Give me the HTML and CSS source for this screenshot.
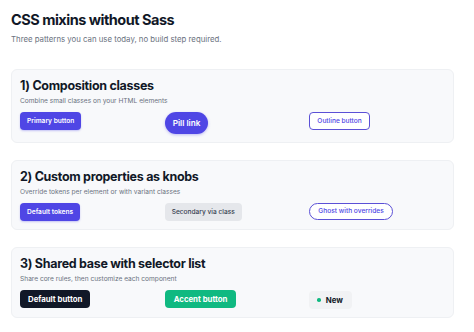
FILE: index.html
```html
<html><head>
<title>CSS mixins without Sass</title>
<link rel="stylesheet" href="styles.css">
</head>
<body>
<header class="intro">
  <h1>CSS mixins without Sass</h1>
  <p>Three patterns you can use today, no build step required.</p>
</header>

<section class="card">
  <h2>1) Composition classes</h2>
  <p class="desc">Combine small classes on your HTML elements</p>
  <div class="row">
    <div><a class="btn btn-primary">Primary button</a></div>
    <div><a class="btn btn-pill">Pill link</a></div>
    <div><a class="btn btn-outline">Outline button</a></div>
  </div>
</section>

<section class="card">
  <h2>2) Custom properties as knobs</h2>
  <p class="desc">Override tokens per element or with variant classes</p>
  <div class="row">
    <div><a class="btn btn-primary">Default tokens</a></div>
    <div><a class="btn btn-secondary">Secondary via class</a></div>
    <div><a class="btn btn-ghost">Ghost with overrides</a></div>
  </div>
</section>

<section class="card">
  <h2>3) Shared base with selector list</h2>
  <p class="desc">Share core rules, then customize each component</p>
  <div class="row">
    <div><a class="base btn-dark">Default button</a></div>
    <div><a class="base btn-accent">Accent button</a></div>
    <div><span class="base badge"><i class="dot"></i>New</span></div>
  </div>
</section>
</body></html>
```

FILE: styles.css
```css
body {
  margin: 0;
  padding: 10px 20px 10px 11px;
  background: #fff;
  font-family: Inter, "Noto Sans", sans-serif;
  color: #111827;
}

.intro {
  margin-bottom: 25px;
}

.intro h1 {
  margin: 0;
  font-size: 14.5px;
  line-height: 19px;
  font-weight: 700;
  letter-spacing: -0.5px;
}

.intro p {
  margin: 5px 0 0;
  font-size: 7.8px;
  line-height: 10px;
  color: #6b7280;
}

.card {
  background: #f8f9fb;
  border: 1px solid #eef0f3;
  border-radius: 6px;
  padding: 8px;
  margin-bottom: 17px;
}

.card h2 {
  margin: 0;
  font-size: 12.5px;
  line-height: 16px;
  font-weight: 700;
  letter-spacing: -0.3px;
}

.desc {
  margin: 3px 0 6px;
  font-size: 6.6px;
  line-height: 9px;
  color: #6b7280;
}

.row {
  display: grid;
  grid-template-columns: repeat(3, 1fr);
  gap: 9px;
  align-items: start;
}

.btn {
  display: inline-block;
  font-size: 6.6px;
  line-height: 18px;
  font-weight: 600;
  padding: 0 7px;
  border-radius: 4px;
  box-sizing: border-box;
}

.btn-primary {
  background: #4f46e5;
  color: #fff;
  box-shadow: 0 1px 2px rgba(79, 70, 229, 0.3);
}

.btn-pill {
  background: #4f46e5;
  color: #fff;
  font-size: 8.2px;
  line-height: 22px;
  padding: 0 8px;
  border-radius: 11px;
  box-shadow: 0 1px 3px rgba(79, 70, 229, 0.35);
}

.btn-outline {
  border: 1.5px solid #5b50d6;
  color: #4f46e5;
  background: #fff;
  font-weight: 500;
  line-height: 16px;
  padding: 0 7px;
}

.btn-secondary {
  background: #e5e7eb;
  color: #374151;
  font-weight: 500;
  line-height: 18px;
}

.btn-ghost {
  border: 1.5px solid #5b50d6;
  color: #4f46e5;
  background: #fff;
  font-weight: 500;
  line-height: 15px;
  padding: 0 8px;
  border-radius: 10px;
}

.base {
  display: inline-flex;
  align-items: center;
  font-size: 7.8px;
  font-weight: 700;
  height: 17.5px;
  padding: 0 8px;
  border-radius: 4px;
}

.btn-dark {
  background: #111827;
  color: #fff;
}

.btn-accent {
  background: #10b981;
  color: #fff;
  padding: 0 9px;
}

.badge {
  background: #f1f2f4;
  color: #111827;
  height: 18px;
  margin-top: 1px;
  padding: 0 9px 0 8px;
}

.dot {
  width: 3.5px;
  height: 3.5px;
  border-radius: 50%;
  background: #10b981;
  margin-right: 5px;
}
```
